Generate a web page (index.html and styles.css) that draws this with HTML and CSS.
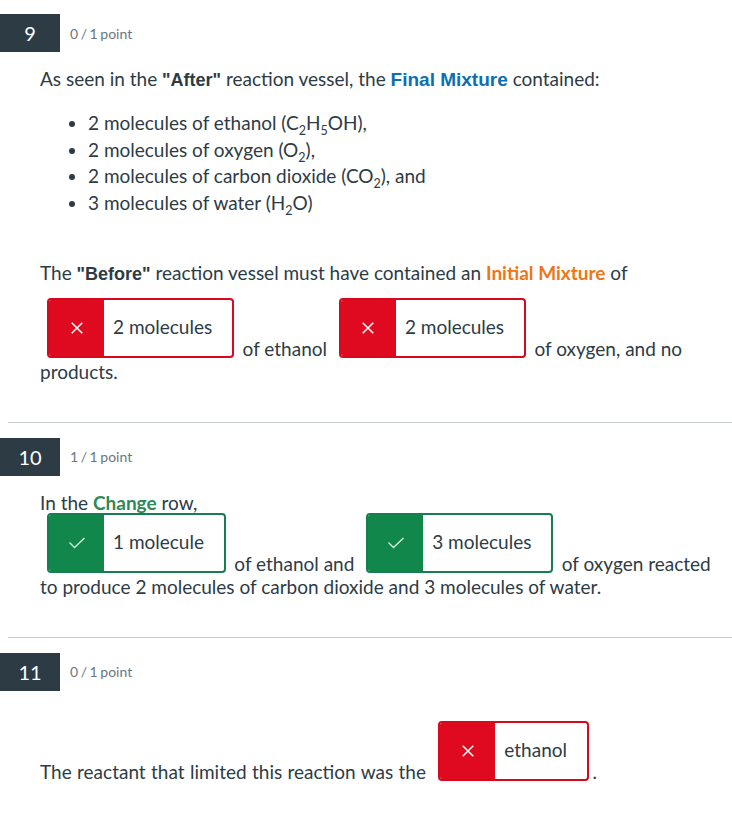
FILE: index.html
```html
<!DOCTYPE html>
<html>
<head>
<meta charset="utf-8">
<link rel="stylesheet" href="styles.css">
</head>
<body>
<div class="quiz">
  <section class="question">
    <div class="qhead">
      <div class="badge">9</div>
      <div class="pts">0 / 1 point</div>
    </div>
    <div class="qbody">
      <p class="lead">As seen in the <b class="arial">"After"</b> reaction vessel, the <b class="arial blue">Final Mixture</b> contained:</p>
      <ul class="mols">
        <li>2 molecules of ethanol (C<sub>2</sub>H<sub>5</sub>OH),</li>
        <li>2 molecules of oxygen (O<sub>2</sub>),</li>
        <li>2 molecules of carbon dioxide (CO<sub>2</sub>), and</li>
        <li>3 molecules of water (H<sub>2</sub>O)</li>
      </ul>
      <p class="before">The <b class="arial">"Before"</b> reaction vessel must have contained an <b class="orange">Initial Mixture</b> of</p>
      <p class="fill gap"><span class="blank wrong"><span class="inner"><span class="mark"><svg viewBox="0 0 12 12" width="12" height="12"><path d="M0.7 0.7L11.3 11.3M11.3 0.7L0.7 11.3" stroke="#fff" stroke-width="1.5" fill="none"/></svg></span><span class="ans">2 molecules</span></span></span> of ethanol <span class="blank wrong"><span class="inner"><span class="mark"><svg viewBox="0 0 12 12" width="12" height="12"><path d="M0.7 0.7L11.3 11.3M11.3 0.7L0.7 11.3" stroke="#fff" stroke-width="1.5" fill="none"/></svg></span><span class="ans">2 molecules</span></span></span> of oxygen, and no products.</p>
    </div>
  </section>

  <section class="question">
    <div class="qhead">
      <div class="badge">10</div>
      <div class="pts">1 / 1 point</div>
    </div>
    <div class="qbody">
      <p class="lead">In the <b class="green">Change</b> row,</p>
      <p class="fill tight"><span class="blank right"><span class="inner"><span class="mark"><svg viewBox="0 0 18 12" width="18" height="12"><path d="M1.5 5.5L6.5 10.5L16.5 1" stroke="#cfeedc" stroke-width="1.4" fill="none"/></svg></span><span class="ans">1 molecule</span></span></span> of ethanol and <span class="blank right"><span class="inner"><span class="mark"><svg viewBox="0 0 18 12" width="18" height="12"><path d="M1.5 5.5L6.5 10.5L16.5 1" stroke="#cfeedc" stroke-width="1.4" fill="none"/></svg></span><span class="ans">3 molecules</span></span></span> of oxygen reacted to produce 2 molecules of carbon dioxide and 3 molecules of water.</p>
    </div>
  </section>

  <section class="question last">
    <div class="qhead">
      <div class="badge">11</div>
      <div class="pts">0 / 1 point</div>
    </div>
    <div class="qbody">
      <p class="fill q11">The reactant that limited this reaction was the <span class="blank wrong"><span class="inner"><span class="mark"><svg viewBox="0 0 12 12" width="12" height="12"><path d="M0.7 0.7L11.3 11.3M11.3 0.7L0.7 11.3" stroke="#fff" stroke-width="1.5" fill="none"/></svg></span><span class="ans">ethanol</span></span></span>.</p>
    </div>
  </section>
</div>
</body>
</html>
```

FILE: styles.css
```css
html, body {
  margin: 0;
  padding: 0;
  background: #fff;
}
body {
  font-family: Lato, "Liberation Sans", sans-serif;
  color: #2d3b45;
  font-size: 19px;
}
.quiz {
  padding-top: 14px;
}
.question {
  border-bottom: 1px solid #c7cdd1;
  margin-left: 8px;
  padding-bottom: 39px;
}
.question.last {
  border-bottom: none;
}
.question + .question {
  padding-top: 15px;
}
.qhead {
  display: flex;
  align-items: center;
  margin-left: -8px;
}
.badge {
  width: 60px;
  height: 38px;
  background: #2d3b45;
  color: #fff;
  font-size: 20px;
  display: flex;
  align-items: center;
  justify-content: center;
}
.pts {
  margin-left: 10px;
  font-size: 14px;
  color: #6b7780;
  word-spacing: -1px;
}
.qbody {
  padding-left: 32px;
}
p {
  margin: 0;
}
.lead {
  margin-top: 15px;
  line-height: 23px;
}
.arial {
  font-family: "Liberation Sans", Arial, sans-serif;
  font-weight: bold;
  font-size: 18px;
}
.arial.blue {
  font-size: 19px;
  color: #0b6fb2;
}
.orange {
  color: #ef7516;
}
.green {
  color: #2c8a57;
}
.mols {
  margin: 18px 0 0;
  padding-left: 48px;
  line-height: 26.7px;
}
sub {
  font-size: 12.5px;
  vertical-align: -5px;
  line-height: 0;
}
.before {
  margin-top: 44px;
  line-height: 23px;
}
.fill {
  line-height: 23px;
}
.fill.gap {
  margin-top: 12px;
}
.fill.tight {
  margin-top: -1px;
}
.blank {
  display: inline-block;
  vertical-align: -2px;
  height: 60px;
  box-sizing: border-box;
  border: 2px solid;
  border-radius: 4px;
  margin: 0 3.5px 0 7px;
  overflow: hidden;
  background: #fff;
}
.inner {
  display: flex;
  height: 100%;
}
.blank.wrong {
  border-color: #d6091f;
}
.blank.right {
  border-color: #148050;
}
.mark {
  width: 55px;
  display: flex;
  align-items: center;
  justify-content: center;
}
.wrong .mark {
  background: #df0a20;
}
.right .mark {
  background: #11874b;
}
.ans {
  display: flex;
  align-items: center;
  padding: 0 20px 2px 9px;
  color: #2d3b45;
  line-height: 1;
}
.q11 {
  margin-top: 30px;
  word-spacing: 0.5px;
}
```
